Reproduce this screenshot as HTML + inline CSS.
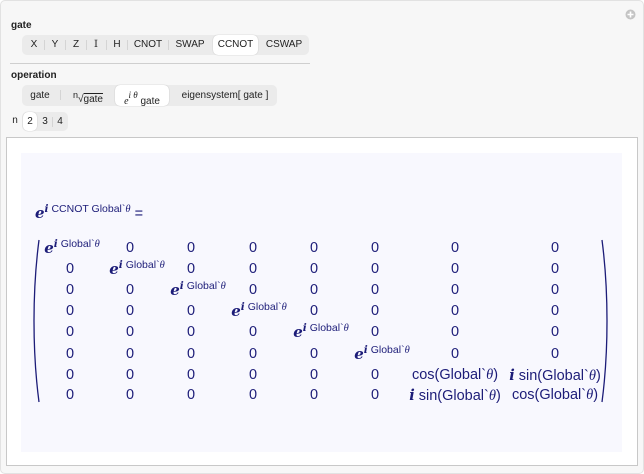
<!DOCTYPE html>
<html><head><style>
body{margin:0;width:644px;height:474px;background:#fff;font-family:"Liberation Sans",Arial,sans-serif;position:relative;overflow:hidden}
.panel{position:absolute;left:0;top:0;width:642px;height:472px;background:#f7f7f7;border:1px solid #e2e2e2;border-radius:5px}
.lbl{position:absolute;font-size:10px;font-weight:bold;color:#222}
.bar{position:absolute;background:#ebebeb;border-radius:5px;height:20px}
.b{position:absolute;top:0;height:20px;line-height:20px;font-size:10px;color:#222;text-align:center}
.sel{background:#fff;border-radius:5px;box-shadow:0 0 1px #aaa}
.sep{position:absolute;top:5px;width:1px;height:10px;background:#d4d4d4}
.out{position:absolute;left:6px;top:137px;width:630px;height:327px;background:#fff;border:1px solid #c8c8c8}
.in{position:absolute;left:21px;top:153px;width:601px;height:299px;background:#f8f8fe}
.m{position:absolute;color:#1c1c78;font-size:14.5px;white-space:nowrap;transform:translateX(-50%)}
.e{font-family:"DejaVu Serif",serif;font-style:italic;font-weight:bold;font-size:15px}
sup{font-size:10.5px;vertical-align:6px}
.i{font-family:"DejaVu Serif",serif;font-style:italic;font-weight:bold}
.th{font-family:"Liberation Serif",serif;font-style:italic}
</style></head><body>
<div class="panel"></div>
<svg style="position:absolute;left:625px;top:9px" width="11" height="11"><circle cx="5.5" cy="5.5" r="5" fill="#c4c4c4"/><path d="M5.5 2.5v6M2.5 5.5h6" stroke="#fff" stroke-width="1.6"/></svg>
<div class="lbl" style="left:11px;top:20px">gate</div>
<div class="bar" style="left:22px;top:35px;width:287px">
<div class="b" style="left:4px;width:16px">X</div><div class="sep" style="left:22px"></div>
<div class="b" style="left:25px;width:16px">Y</div><div class="sep" style="left:43px"></div>
<div class="b" style="left:46px;width:16px">Z</div><div class="sep" style="left:64px"></div>
<div class="b" style="left:67px;width:14px">𝕀</div><div class="sep" style="left:84px"></div>
<div class="b" style="left:87px;width:16px">H</div><div class="sep" style="left:105px"></div>
<div class="b" style="left:108px;width:36px">CNOT</div><div class="sep" style="left:146px"></div>
<div class="b" style="left:148px;width:40px">SWAP</div>
<div class="b sel" style="left:191px;width:45px">CCNOT</div>
<div class="b" style="left:239px;width:46px">CSWAP</div>
</div>
<div style="position:absolute;left:10px;top:63px;width:300px;height:1px;background:#cfcfcf"></div>
<div class="lbl" style="left:11px;top:70px">operation</div>
<div class="bar" style="left:22px;top:85px;width:255px;height:21px">
<div class="b" style="left:2px;width:32px;height:21px;line-height:21px">gate</div><div class="sep" style="left:38px"></div>
<div class="b" style="left:44px;width:44px;height:21px;line-height:21px"><sup style="font-size:9px;vertical-align:4px">n</sup>√<span style="text-decoration:overline">gate</span></div>
<div class="b sel" style="left:93px;width:54px;height:21px;line-height:21px"><span class="th">e</span><sup class="th" style="font-size:9px">i θ</sup> gate</div>
<div class="b" style="left:151px;width:104px;height:21px;line-height:21px">eigensystem[ gate ]</div>
</div>
<div class="b" style="left:11px;top:112px;width:8px;height:18px;line-height:18px;position:absolute">n</div>
<div class="bar" style="left:22px;top:112px;width:46px;height:19px">
<div class="b sel" style="left:1px;width:14px;height:19px;line-height:19px">2</div>
<div class="b" style="left:17px;width:12px;height:19px;line-height:19px">3</div><div class="sep" style="left:30px"></div>
<div class="b" style="left:32px;width:12px;height:19px;line-height:19px">4</div>
</div>
<div class="out"></div>
<div class="in"></div>
<div class="m" style="left:35px;top:203px;transform:none"><span class="e">e</span><sup><span class="i">i</span> CCNOT Global`<span class="th">θ</span></sup> =</div>
<svg style="position:absolute;left:33px;top:238px" width="580" height="166"><path d="M6 2Q1 40 1 83Q1 126 6 164" stroke="#1c1c78" stroke-width="1.3" fill="none"/><path d="M569 2Q574 40 574 83Q574 126 569 164" stroke="#1c1c78" stroke-width="1.3" fill="none"/></svg>
<div id="mx"></div>
<script>
var rows=[240,261,282,303,324,346,367,387],cols=[70,130,191,253,314,375,455,555];
var E='<span class="e">e</span><sup><span class="i">i</span> Global`<span class="th">θ</span></sup>';
var ecx=[72,137,198,259,321,382];
var h='';
for(var r=0;r<8;r++)for(var c=0;c<8;c++){var t='0',x=cols[c],y=rows[r];
if(r==c&&r<6){t=E;x=ecx[r];y-=2;}
if(r==6&&c==6)t='cos(Global`<span class="th">θ</span>)';
if(r==6&&c==7)t='<span class="i">i</span> sin(Global`<span class="th">θ</span>)';
if(r==7&&c==6)t='<span class="i">i</span> sin(Global`<span class="th">θ</span>)';
if(r==7&&c==7)t='cos(Global`<span class="th">θ</span>)';
h+='<div class="m" style="left:'+x+'px;top:'+y+'px">'+t+'</div>';}
document.getElementById('mx').innerHTML=h;
</script>
</body></html>
